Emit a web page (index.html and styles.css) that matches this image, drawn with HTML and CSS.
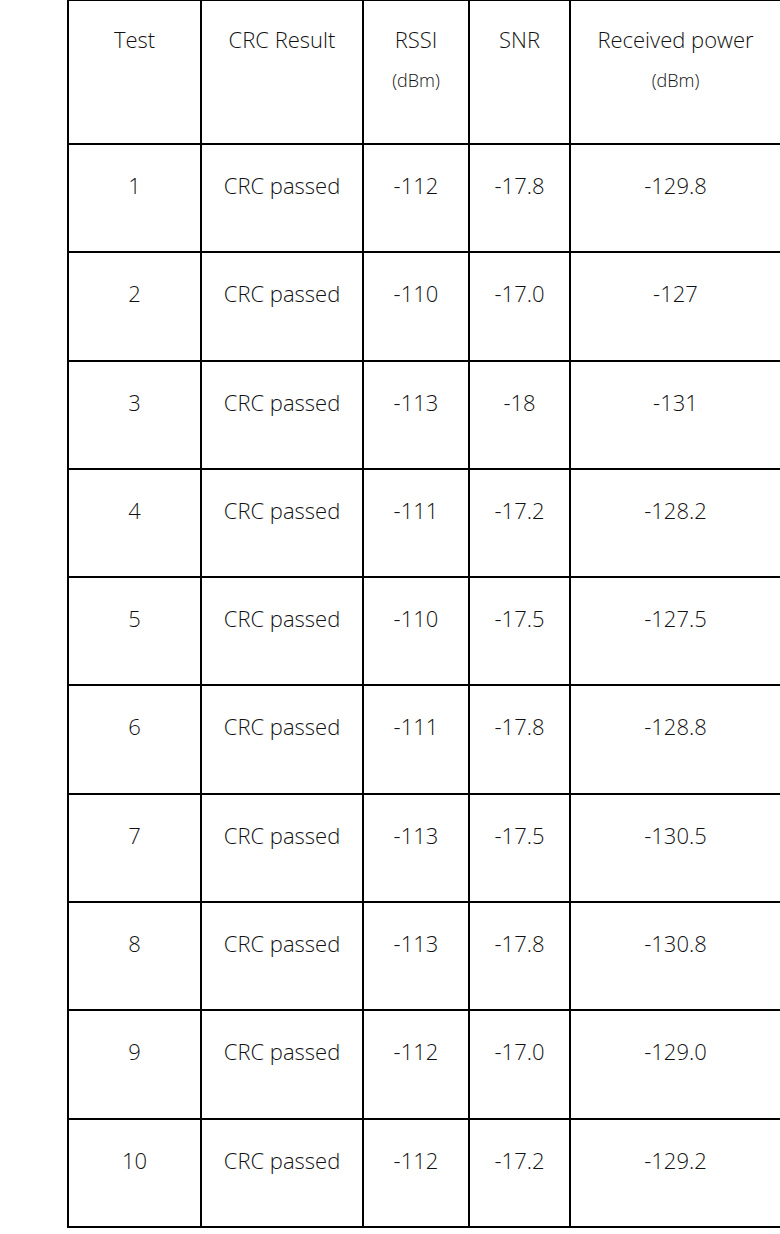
FILE: index.html
```html
<!DOCTYPE html>
<html>
<head>
<meta charset="utf-8">
<link rel="stylesheet" href="styles.css">
</head>
<body>
<table class="results">
  <colgroup>
    <col class="c-test">
    <col class="c-crc">
    <col class="c-rssi">
    <col class="c-snr">
    <col class="c-power">
  </colgroup>
  <thead>
    <tr>
      <th>Test</th>
      <th>CRC Result</th>
      <th>RSSI<span class="unit">(dBm)</span></th>
      <th>SNR</th>
      <th>Received power<span class="unit">(dBm)</span></th>
    </tr>
  </thead>
  <tbody>
    <tr><td>1</td><td>CRC passed</td><td>-112</td><td>-17.8</td><td>-129.8</td></tr>
    <tr><td>2</td><td>CRC passed</td><td>-110</td><td>-17.0</td><td>-127</td></tr>
    <tr><td>3</td><td>CRC passed</td><td>-113</td><td>-18</td><td>-131</td></tr>
    <tr><td>4</td><td>CRC passed</td><td>-111</td><td>-17.2</td><td>-128.2</td></tr>
    <tr><td>5</td><td>CRC passed</td><td>-110</td><td>-17.5</td><td>-127.5</td></tr>
    <tr><td>6</td><td>CRC passed</td><td>-111</td><td>-17.8</td><td>-128.8</td></tr>
    <tr><td>7</td><td>CRC passed</td><td>-113</td><td>-17.5</td><td>-130.5</td></tr>
    <tr><td>8</td><td>CRC passed</td><td>-113</td><td>-17.8</td><td>-130.8</td></tr>
    <tr><td>9</td><td>CRC passed</td><td>-112</td><td>-17.0</td><td>-129.0</td></tr>
    <tr><td>10</td><td>CRC passed</td><td>-112</td><td>-17.2</td><td>-129.2</td></tr>
  </tbody>
</table>
</body>
</html>
```

FILE: styles.css
```css
html, body {
  margin: 0;
  padding: 0;
  background: #ffffff;
}

body {
  font-family: "Open Sans", "Noto Sans", sans-serif;
  font-weight: 300;
  color: #111;
  overflow: hidden;
}

.results {
  border-collapse: collapse;
  table-layout: fixed;
  width: 713px;
  margin-top: -1px;
  margin-left: 67px;
}

.c-test { width: 133px; }
.c-crc { width: 162px; }
.c-rssi { width: 106px; }
.c-snr { width: 101px; }
.c-power { width: 211px; }

.results th,
.results td {
  border: 2px solid #000;
  text-align: center;
  vertical-align: top;
  font-size: 22px;
  line-height: 28px;
  font-weight: 300;
  padding: 0;
}

.results th {
  height: 144px;
  padding-top: 24px;
  box-sizing: border-box;
}

.results td {
  height: 108.3px;
  padding-top: 26px;
  box-sizing: border-box;
}

.unit {
  display: block;
  font-size: 18px;
  line-height: 22px;
  margin-top: 16px;
}
```
